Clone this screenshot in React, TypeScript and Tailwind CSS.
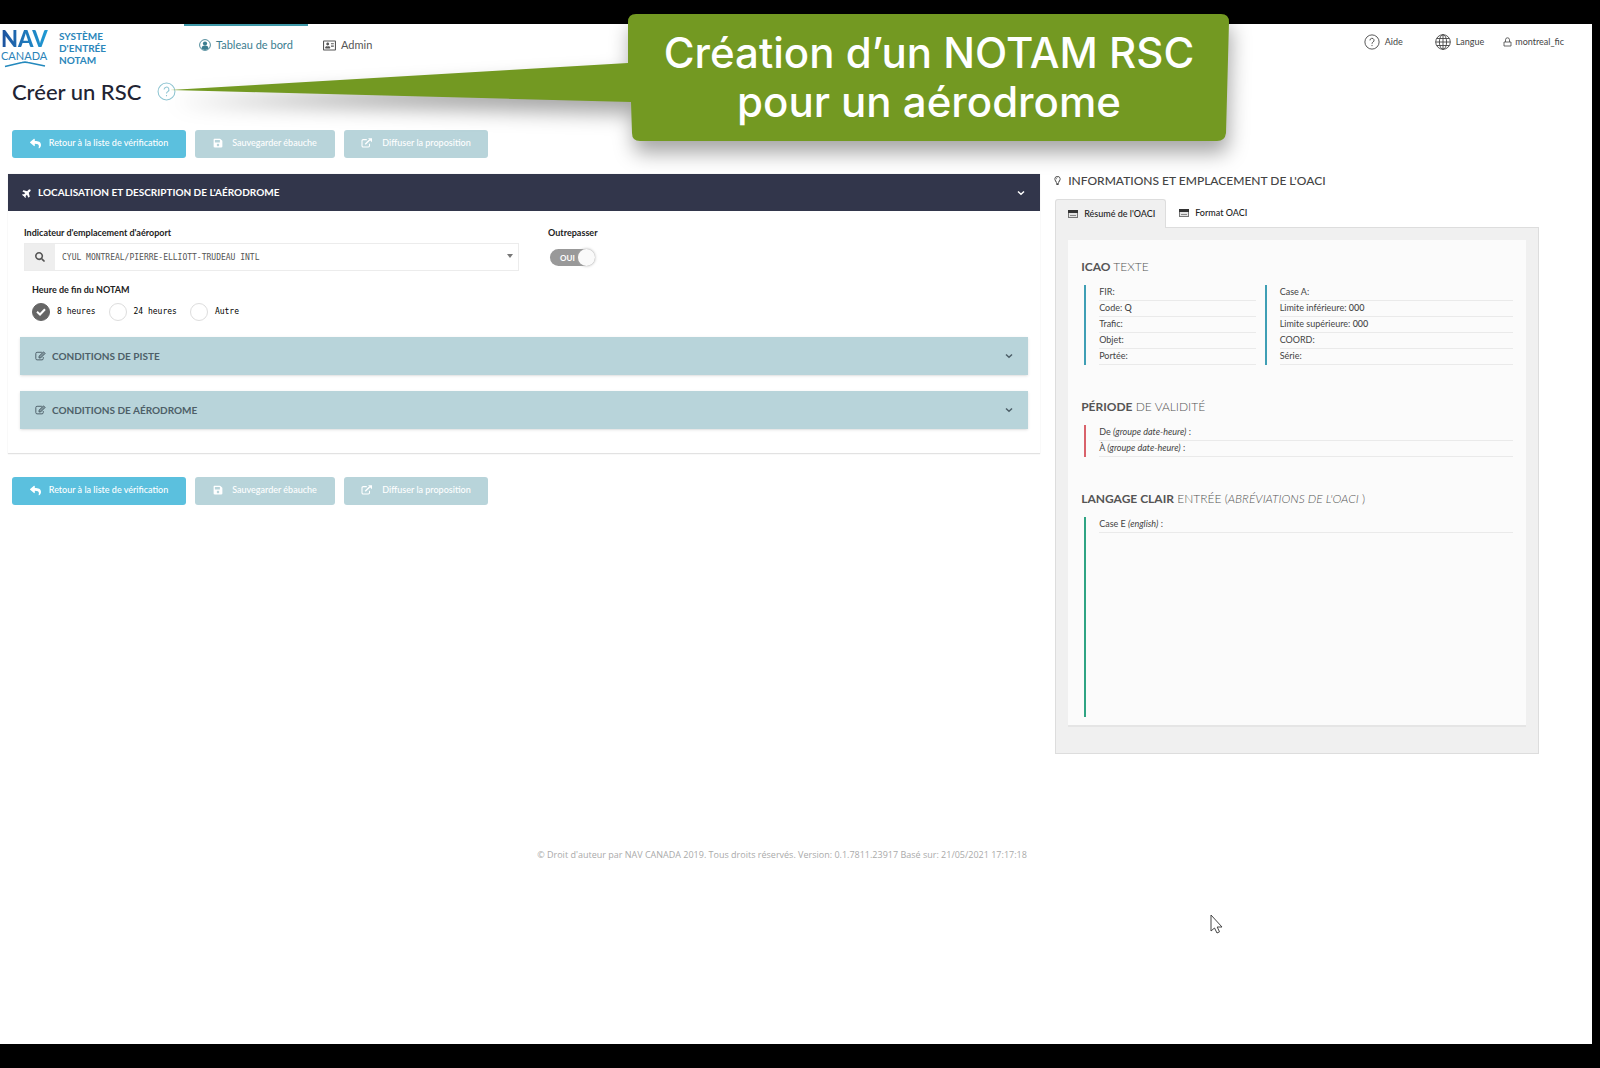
import type { ReactNode } from 'react'
import { FaPlane, FaRegAddressCard, FaRegLightbulb, FaReply, FaSave, FaSearch } from 'react-icons/fa'

function UserIcon() {
  return (
    <svg viewBox="0 0 12 12" className="size-3" fill="none" stroke="currentColor" strokeWidth="0.900">
      <circle cx="6" cy="6" r="5.400" />
      <circle cx="6" cy="4.600" r="2.100" fill="currentColor" stroke="none" />
      <path d="M2.500 9.600C2.600 7.800 3.600 7 4.500 6.800h3c.9.2 1.900 1 2 2.800C8.500 10.500 7.300 11 6 11S3.500 10.500 2.500 9.600z" fill="currentColor" stroke="none" />
    </svg>
  )
}

function EditIcon() {
  return (
    <svg viewBox="0 0 16 14" className="h-[10px] w-[11px]" fill="none" stroke="currentColor" strokeWidth="1.4">
      <path d="M12 8.500v2.300A1.800 1.800 0 0 1 10.200 12.600H3A1.800 1.800 0 0 1 1.200 10.800V3.400A1.800 1.800 0 0 1 3 1.600h7" />
      <path d="M5.800 9.800V7.400L12.400 1l2.300 2.300-6.500 6.500z" fill="currentColor" fillOpacity="0.5" />
    </svg>
  )
}

function ExternalIcon() {
  return (
    <svg viewBox="0 0 16 14" className="h-[10px] w-[12px]" fill="none" stroke="currentColor" strokeWidth="1.5">
      <path d="M11.500 8v3a1.700 1.700 0 0 1-1.700 1.700H2.700A1.700 1.700 0 0 1 1 11V4a1.700 1.700 0 0 1 1.700-1.700h5" />
      <path d="M5.500 8.800 12 2.600" strokeWidth="2" />
      <path d="M9.500.5H15V6z" fill="currentColor" stroke="none" />
    </svg>
  )
}

function WindowIcon() {
  return (
    <svg viewBox="0 0 10 8" className="h-2 w-[10px] shrink-0">
      <rect x="0.500" y="0.500" width="9" height="7" fill="#e4e4e4" stroke="#777" />
      <rect width="10" height="3" fill="#333" />
      <path d="M2 5.500h6" stroke="#888" />
    </svg>
  )
}

function HelpIcon({ className }: { className: string }) {
  return (
    <svg viewBox="0 0 18 18" className={className} fill="none" stroke="currentColor">
      <circle cx="9" cy="9" r="8" />
      <path d="M6.700 7.200a2.300 2.300 0 1 1 3.500 1.900C9.300 9.700 9 10 9 11M9 12.300v1.300" />
    </svg>
  )
}

function GlobeIcon() {
  return (
    <svg viewBox="0 0 16 16" className="size-4" fill="none" stroke="currentColor" strokeWidth="0.900">
      <circle cx="8" cy="8" r="7.300" />
      <ellipse cx="8" cy="8" rx="3.600" ry="7.300" />
      <path d="M8 .7v14.600M.7 8h14.600M1.700 4.500h12.600M1.700 11.500h12.600" />
    </svg>
  )
}

function LockIcon() {
  return (
    <svg viewBox="0 0 9 10" className="h-[10px] w-[9px]" fill="none" stroke="currentColor" strokeWidth="0.800">
      <path d="M1 5h7v4H1zM2.500 5V2.800a2 2 0 0 1 4 0V5" />
    </svg>
  )
}

function Chevron() {
  return (
    <svg viewBox="0 0 8 6" className="h-[6px] w-2" fill="none" stroke="currentColor" strokeWidth="1.500">
      <path d="M1 1.500 4 4.300 7 1.500" />
    </svg>
  )
}

function Logo() {
  return (
    <a href="#" className="flex w-[184px] shrink-0 gap-[9px] pt-[3px]">
      <div className="w-[50px]">
        <div className="bg-linear-to-r from-[#1d4f9c] to-[#1fa0d8] bg-clip-text pl-px text-[22px] leading-[24px] font-black text-transparent">
          NAV
        </div>
        <div className="pl-px text-[11px] leading-[10px] text-[#2b83b8]">CANADA</div>
        <svg viewBox="0 0 50 7" className="h-[7px] w-[50px]">
          <path d="M5 5.500 22 1.500q3-.800 6 0l17 3.500" fill="none" stroke="#2489bd" strokeWidth="1.600" />
        </svg>
      </div>
      <div className="pt-[3px] text-[10px] leading-[12px] font-bold text-[#2b86ba]">
        SYSTÈME
        <br />
        D'ENTRÉE
        <br />
        NOTAM
      </div>
    </a>
  )
}

function Header() {
  return (
    <header className="flex h-[43px] items-start">
      <Logo />
      <nav className="flex text-[11px] leading-[16px]">
        <a href="#" className="flex w-[124px] items-center gap-[5px] border-t-2 border-[#3f98a8] pt-[11px] pl-[15px] text-[#3b7d8f]">
          <UserIcon />
          Tableau de bord
        </a>
        <a href="#" className="flex items-center gap-[5px] pt-[13px] pl-[15px] text-[#555]">
          <FaRegAddressCard className="size-[13px]" />
          Admin
        </a>
      </nav>
      <div className="ml-auto flex items-center pt-[10px] pr-7 text-[9px] text-[#444]">
        <a href="#" className="flex items-center gap-[5px]">
          <HelpIcon className="size-4" />
          Aide
        </a>
        <a href="#" className="ml-8 flex items-center gap-[5px]">
          <GlobeIcon />
          Langue
        </a>
        <a href="#" className="ml-[19px] flex items-center gap-[3px]">
          <LockIcon />
          montreal_fic
        </a>
      </div>
    </header>
  )
}

function Actions() {
  return (
    <div className="flex gap-[9px] px-3 text-[9px] font-medium text-white">
      <button className="flex h-7 w-[174px] items-center justify-center gap-2 rounded-[3px] bg-[#5bc0de] pb-[2px]">
        <FaReply className="size-[11px]" />
        Retour à la liste de vérification
      </button>
      <button className="flex h-7 w-[140px] items-center justify-center gap-[9px] rounded-[3px] bg-[#b8d4da] pb-[2px]">
        <FaSave className="size-[10px]" />
        Sauvegarder ébauche
      </button>
      <button className="flex h-7 w-[144px] items-center justify-center gap-[9px] rounded-[3px] bg-[#b8d4da] pb-[2px]">
        <ExternalIcon />
        Diffuser la proposition
      </button>
    </div>
  )
}

function Section({ title }: { title: string }) {
  return (
    <button className="flex h-[38px] w-full items-center bg-[#b8d4da] px-[15px] text-[10px] font-bold text-[#4d5f68] shadow-sm">
      <EditIcon />
      <span className="ml-[6px]">{title}</span>
      <span className="ml-auto">
        <Chevron />
      </span>
    </button>
  )
}

const durations = ['8 heures', '24 heures', 'Autre']

function LocationPanel() {
  return (
    <section className="border-b border-[#e2e2e2] pb-6 shadow-[0_0_1px_#ddd]">
      <button className="flex h-[37px] w-full items-center bg-[#32364b] pr-[15px] pl-[14px] text-[10px] font-bold text-white">
        <FaPlane className="size-[10px] -rotate-45" />
        <span className="ml-[6px]">LOCALISATION ET DESCRIPTION DE L'AÉRODROME</span>
        <span className="ml-auto">
          <Chevron />
        </span>
      </button>

      <div className="flex px-4 pt-[15px] text-[9px] leading-[14px] font-bold text-[#222]">
        <div className="w-1/2 pr-[5px]">
          <label htmlFor="airport">Indicateur d'emplacement d'aéroport</label>
          <div className="mt-[3px] flex h-7 border border-[#ececec]">
            <span className="flex w-[30px] items-center justify-center bg-[#eee] text-[#555]">
              <FaSearch className="size-[10px]" />
            </span>
            <div className="relative flex-1">
              <select
                id="airport"
                className="h-full w-full appearance-none bg-white pt-[2px] pl-[7px] font-['DejaVu_Sans_Mono',monospace] text-[8px] font-normal text-[#555]"
              >
                <option>CYUL MONTREAL/PIERRE-ELLIOTT-TRUDEAU INTL</option>
              </select>
              <svg viewBox="0 0 6 4" className="pointer-events-none absolute top-[10px] right-[5px] h-1 w-[6px]" fill="#777">
                <path d="M0 0h6L3 4z" />
              </svg>
            </div>
          </div>
        </div>
        <div className="ml-6">
          <label htmlFor="override">Outrepasser</label>
          <label className="mt-[9px] ml-[2px] flex h-[17px] w-[45px] items-center rounded-full bg-[#999] pl-[10px] text-[8px] text-white">
            <input id="override" type="checkbox" defaultChecked className="sr-only" />
            OUI
            <span className="ml-auto size-[17px] rounded-full bg-[#fafafa] shadow-[0_0_3px_#aaa]" />
          </label>
        </div>
      </div>

      <fieldset className="mt-3 px-6">
        <legend className="text-[9px] leading-[14px] font-bold text-[#222]">Heure de fin du NOTAM</legend>
        <div className="mt-[6px] flex gap-[13px]">
          {durations.map((label, i) => (
            <label
              key={label}
              className="flex items-center gap-[7px] font-['DejaVu_Sans_Mono',monospace] text-[8px] text-black"
            >
              <input type="radio" name="duration" defaultChecked={i === 0} className="peer sr-only" />
              <span className="flex size-[18px] items-center justify-center rounded-full border border-[#ddd] text-white peer-checked:border-[#666] peer-checked:bg-[#666]">
                <svg viewBox="0 0 10 8" className="h-2 w-[10px]" fill="none" stroke="currentColor" strokeWidth="2">
                  <path d="M1 3.800 4 6.500 9 1.200" />
                </svg>
              </span>
              {label}
            </label>
          ))}
        </div>
      </fieldset>

      <div className="mt-4 space-y-4 px-3">
        <Section title="CONDITIONS DE PISTE" />
        <Section title="CONDITIONS DE AÉRODROME" />
      </div>
    </section>
  )
}

function Row({ label, children }: { label: string; children?: ReactNode }) {
  return (
    <div className="h-4 border-b border-[#eaeaea] text-[9px] leading-[13px] whitespace-nowrap text-[#444]">
      {label} {children}
    </div>
  )
}

function Summary() {
  return (
    <aside>
      <h2 className="flex h-[13px] items-center gap-[6px] text-[12px] font-medium text-[#444]">
        <FaRegLightbulb className="-ml-[2px] size-[9px]" />
        INFORMATIONS ET EMPLACEMENT DE L'OACI
      </h2>
      <div className="mt-3 flex text-[9px] font-medium text-[#222]">
        <button className="relative z-10 -mb-px flex h-[29px] w-[111px] items-center gap-[6px] rounded-t-[3px] border border-b-0 border-[#ddd] bg-[#f0f0f0] pl-3">
          <WindowIcon />
          Résumé de l'OACI
        </button>
        <button className="flex h-7 items-center gap-[6px] pl-[13px]">
          <WindowIcon />
          Format OACI
        </button>
      </div>
      <div className="border border-[#ddd] bg-[#f0f0f0] px-3 pt-3 pb-[26px]">
        <div className="border-b-2 border-[#e5e5e5] bg-[#fbfbfb] px-[13px] pt-[19px] pb-2 text-[12px] text-[#555]">
          <h3 className="leading-[16px] font-light">
            <b className="font-bold">ICAO</b> TEXTE
          </h3>
          <div className="mt-[10px] ml-[3px] flex gap-[9px]">
            <div className="w-[40%] border-l-2 border-[#3f9fb5] pl-[13px]">
              <Row label="FIR:" />
              <Row label="Code:">
                <span className="font-medium">Q</span>
              </Row>
              <Row label="Trafic:" />
              <Row label="Objet:" />
              <Row label="Portée:" />
            </div>
            <div className="flex-1 border-l-2 border-[#3f9fb5] pl-[13px]">
              <Row label="Case A:" />
              <Row label="Limite inférieure:">
                <span className="font-medium">000</span>
              </Row>
              <Row label="Limite supérieure:">
                <span className="font-medium">000</span>
              </Row>
              <Row label="COORD:" />
              <Row label="Série:" />
            </div>
          </div>

          <h3 className="mt-[34px] leading-[16px] font-light">
            <b className="font-bold">PÉRIODE</b> DE VALIDITÉ
          </h3>
          <div className="mt-[10px] ml-[3px] border-l-2 border-[#d9626b] pl-[13px]">
            <Row label="De">
              <i>(groupe date-heure)</i> :
            </Row>
            <Row label="À">
              <i>(groupe date-heure)</i> :
            </Row>
          </div>

          <h3 className="mt-[34px] leading-[16px] font-light">
            <b className="font-bold">LANGAGE CLAIR</b> ENTRÉE (<i>ABRÉVIATIONS DE L'OACI</i> )
          </h3>
          <div className="mt-[10px] ml-[3px] min-h-[200px] border-l-2 border-[#2fa483] pl-[13px]">
            <Row label="Case E">
              <i>(english)</i> :
            </Row>
          </div>
        </div>
      </div>
    </aside>
  )
}

function Callout() {
  return (
    <div className="pointer-events-none absolute top-[14px] left-[170px] h-[128px] w-[1060px]">
      <svg
        viewBox="0 0 1060 128"
        className="absolute inset-0 overflow-visible drop-shadow-[2px_12px_10px_rgba(0,0,0,0.35)]"
        fill="#739922"
      >
        <path d="M466 0H1051Q1059 0 1059 8L1056 119Q1055 127 1047 127H470Q462 127 462 119L461 88 0 76 458 49V8Q458 0 466 0Z" />
      </svg>
      <p className="relative ml-[458px] pt-[14px] text-center font-['Inter',sans-serif] text-[42px] leading-[49px] font-medium text-white">
        Création d’un NOTAM RSC
        <br />
        pour un aérodrome
      </p>
    </div>
  )
}

function Cursor() {
  return (
    <svg viewBox="0 0 13 20" className="absolute top-[914px] left-[1210px] h-5 w-[13px]" fill="#fff" stroke="#444">
      <path d="M1 1v16l3.500-3 2.500 5 2.500-1.200L7.200 13H12z" />
    </svg>
  )
}

export default function App() {
  return (
    <div className="relative flex min-h-screen flex-col bg-black py-6 pr-2 font-['Lato',sans-serif]">
      <main className="flex-1 bg-white">
        <Header />
        <div className="flex h-12 items-center gap-4 px-3">
          <h1 className="text-[22px] font-medium text-[#222433]">Créer un RSC</h1>
          <button aria-label="Aide" className="text-[#8fc5d2]">
            <HelpIcon className="size-[19px]" />
          </button>
        </div>
        <div className="mt-[15px]">
          <Actions />
        </div>
        <div className="mt-4 grid grid-cols-[32fr_15fr] gap-[15px] pr-[53px] pl-2">
          <div>
            <LocationPanel />
            <div className="mt-[23px] -ml-2">
              <Actions />
            </div>
          </div>
          <Summary />
        </div>
        <footer className="mt-[93px] pr-7 text-center font-['Open_Sans',sans-serif] text-[9px] leading-[16px] text-[#aaa]">
          © Droit d'auteur par NAV CANADA 2019. Tous droits réservés. Version: 0.1.7811.23917 Basé sur: 21/05/2021 17:17:18
        </footer>
      </main>
      <Callout />
      <Cursor />
    </div>
  )
}
